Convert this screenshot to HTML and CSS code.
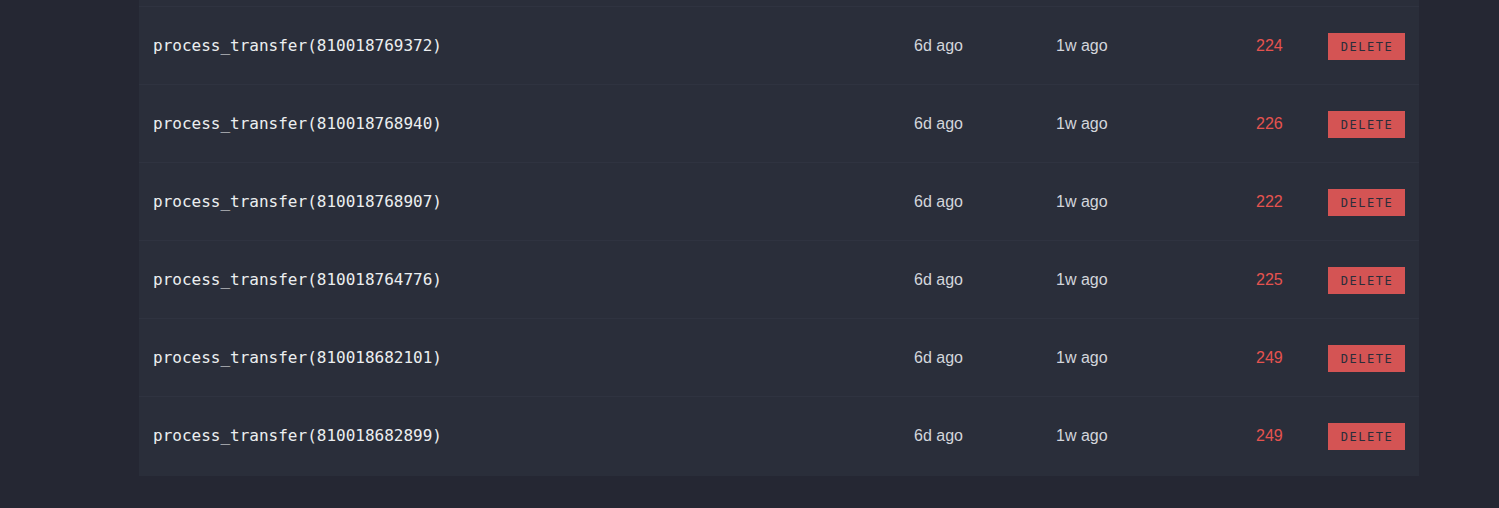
FILE: index.html
```html
<!DOCTYPE html>
<html>
<head>
<meta charset="utf-8">
<link rel="stylesheet" href="styles.css">
</head>
<body>
<div class="panel">
  <div class="row"><span class="name">process_transfer(810018769372)</span><span class="ago">6d ago</span><span class="ago">1w ago</span><span class="count">224</span><span class="act"><button class="del">DELETE</button></span></div>
  <div class="row"><span class="name">process_transfer(810018768940)</span><span class="ago">6d ago</span><span class="ago">1w ago</span><span class="count">226</span><span class="act"><button class="del">DELETE</button></span></div>
  <div class="row"><span class="name">process_transfer(810018768907)</span><span class="ago">6d ago</span><span class="ago">1w ago</span><span class="count">222</span><span class="act"><button class="del">DELETE</button></span></div>
  <div class="row"><span class="name">process_transfer(810018764776)</span><span class="ago">6d ago</span><span class="ago">1w ago</span><span class="count">225</span><span class="act"><button class="del">DELETE</button></span></div>
  <div class="row"><span class="name">process_transfer(810018682101)</span><span class="ago">6d ago</span><span class="ago">1w ago</span><span class="count">249</span><span class="act"><button class="del">DELETE</button></span></div>
  <div class="row"><span class="name">process_transfer(810018682899)</span><span class="ago">6d ago</span><span class="ago">1w ago</span><span class="count">249</span><span class="act"><button class="del">DELETE</button></span></div>
</div>
</body>
</html>
```
FILE: styles.css
```css
html, body {
  margin: 0;
  padding: 0;
  background: #252733;
  font-family: "Liberation Sans", Arial, sans-serif;
}
.panel {
  width: 1280px;
  margin: 0 0 0 139px;
  background: #2a2e3a;
  padding-top: 6px;
  padding-bottom: 2px;
}
.row {
  display: grid;
  grid-template-columns: 761px 142px 200px 72px 77px;
  align-items: center;
  height: 77px;
  border-top: 1px solid #2f3340;
  padding: 0 14px;
}
.name {
  font-family: "DejaVu Sans Mono", monospace;
  font-size: 16px;
  color: #eceef0;
}
.ago {
  font-size: 16px;
  color: #d3d6dc;
}
.count {
  font-size: 16px;
  color: #e5534f;
}
.act {
  display: flex;
}
.del {
  width: 77px;
  height: 27px;
  margin-top: 2px;
  border: 0;
  padding: 0 0 0 1px;
  background: #d45454;
  color: #2a2e3a;
  font-family: "DejaVu Sans Mono", monospace;
  font-size: 12px;
  letter-spacing: 1.5px;
}
```
